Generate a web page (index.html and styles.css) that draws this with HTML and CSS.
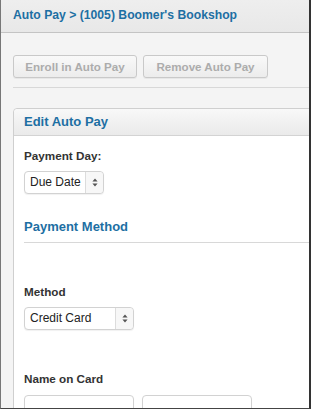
FILE: index.html
```html
<!DOCTYPE html>
<html lang="en">
<head>
    <meta charset="UTF-8">
    <meta name="viewport" content="width=device-width, initial-scale=1.0">
    <title>Auto Pay</title>
    <link rel="stylesheet" href="styles.css">
</head>
<body>
    <div class="window">
        <div class="page-header">
            <h1>Auto Pay &gt; (1005) Boomer's Bookshop</h1>
        </div>

        <div class="content">
            <div class="toolbar">
                <button class="btn" disabled>Enroll in Auto Pay</button>
                <button class="btn" disabled>Remove Auto Pay</button>
            </div>
            <hr class="divider">

            <div class="panel">
                <div class="panel-heading">Edit Auto Pay</div>
                <div class="panel-body">
                    <label class="field-label">Payment Day:</label>
                    <div class="select select-day">
                        <span class="select-value">Due Date</span>
                        <span class="select-arrow">
                            <svg width="6" height="9" viewBox="0 0 6 9"><path d="M3 0.5 L5.6 3.5 H0.4 Z M3 8.5 L5.6 5.5 H0.4 Z" fill="#555"/></svg>
                        </span>
                    </div>

                    <h2 class="section-title">Payment Method</h2>

                    <label class="field-label label-method">Method</label>
                    <div class="select select-method">
                        <span class="select-value">Credit Card</span>
                        <span class="select-arrow">
                            <svg width="6" height="9" viewBox="0 0 6 9"><path d="M3 0.5 L5.6 3.5 H0.4 Z M3 8.5 L5.6 5.5 H0.4 Z" fill="#555"/></svg>
                        </span>
                    </div>

                    <label class="field-label label-name">Name on Card</label>
                    <div class="name-row">
                        <input type="text" class="text-input">
                        <input type="text" class="text-input">
                    </div>
                </div>
            </div>
        </div>
    </div>
</body>
</html>
```

FILE: styles.css
```css
body {
    margin: 0;
    background: #fff;
    font-family: "Liberation Sans", Arial, sans-serif;
    color: #333;
}

.window {
    width: 308px;
    height: 408px;
    border-left: 1px solid #777;
    border-right: 2px solid #333;
    border-bottom: 1px solid #444;
    background: #f4f4f4;
    overflow: hidden;
}

.page-header {
    height: 32px;
    background: linear-gradient(#eeeeee, #e8e8e8);
    border-bottom: 1px solid #c4c4c4;
    padding-left: 12px;
}

.page-header h1 {
    margin: 0;
    font-size: 12.2px;
    line-height: 31px;
    font-weight: bold;
    color: #1d6fa3;
    white-space: nowrap;
}

.content {
    padding: 22px 0 0 12px;
}

.toolbar {
    display: flex;
    gap: 6px;
}

.btn {
    height: 23px;
    padding: 0;
    font-family: inherit;
    font-size: 11.6px;
    font-weight: bold;
    white-space: nowrap;
    color: #acacac;
    background: linear-gradient(#f9f9f9, #ececec);
    border: 1px solid #c9c9c9;
    border-radius: 3px;
    box-shadow: 0 1px 0 rgba(0,0,0,0.05);
}

.btn:first-child {
    width: 124px;
}

.btn:last-child {
    width: 125px;
}

.divider {
    margin: 9px 0 0 0;
    border: 0;
    border-top: 1px solid #d8d8d8;
}

.panel {
    margin-top: 20px;
    width: 330px;
    background: #fff;
    border: 1px solid #cfcfcf;
    border-radius: 4px 0 0 0;
}

.panel-heading {
    height: 26px;
    line-height: 26px;
    padding-left: 10px;
    font-size: 13px;
    font-weight: bold;
    color: #1d6fa3;
    background: linear-gradient(#f8f8f8, #eaeaea);
    border-bottom: 1px solid #d3d3d3;
    border-radius: 4px 0 0 0;
}

.panel-body {
    padding: 12px 0 0 10px;
    display: flex;
    flex-direction: column;
    align-items: flex-start;
}

.field-label {
    font-size: 11.7px;
    font-weight: bold;
    color: #333;
    line-height: 16px;
}

.select {
    margin-top: 7px;
    height: 21px;
    display: flex;
    align-items: stretch;
    background: #fff;
    border: 1px solid #d2d2d2;
    border-radius: 4px;
    box-shadow: 0 1px 1px rgba(0,0,0,0.06);
    font-size: 12px;
    color: #222;
}

.select-value {
    flex: 1;
    padding-left: 5px;
    line-height: 21px;
}

.select-arrow {
    width: 17px;
    border-left: 1px solid #dcdcdc;
    background: #f7f7f7;
    border-radius: 0 4px 4px 0;
    display: flex;
    align-items: center;
    justify-content: center;
}

.select-day {
    width: 78px;
}

.select-method {
    width: 108px;
}

.section-title {
    margin: 25px 0 0 0;
    font-size: 13px;
    line-height: 16px;
    font-weight: bold;
    color: #1d6fa3;
    width: 100%;
    padding-bottom: 7px;
    border-bottom: 1px solid #d8d8d8;
}

.label-method {
    margin-top: 41px;
}

.label-name {
    margin-top: 41px;
}

.name-row {
    margin-top: 8px;
    display: flex;
    gap: 8px;
}

.text-input {
    width: 110px;
    height: 24px;
    box-sizing: border-box;
    border: 1px solid #d2d2d2;
    border-radius: 4px;
    background: #fff;
    box-shadow: 0 1px 1px rgba(0,0,0,0.06);
    margin: 0;
}
```
